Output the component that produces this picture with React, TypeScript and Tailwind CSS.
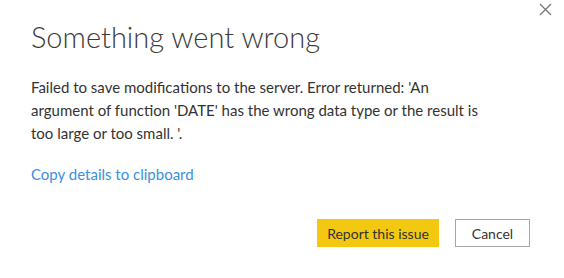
import React from 'react';

const App: React.FC = () => {
    return (
        <div className="relative w-[564px] h-[278px] bg-white text-[#333333] overflow-hidden font-['Lato','Open_Sans',sans-serif]">
            {/* Close */}
            <button className="absolute top-[3px] right-[12px] w-[13px] h-[13px] text-[#777777]">
                <svg viewBox="0 0 13 13" width="13" height="13" fill="none" stroke="currentColor" strokeWidth="1.3">
                    <path d="M1 1 L12 12 M12 1 L1 12" />
                </svg>
            </button>

            <div className="flex flex-col pl-[31px] pr-[34px] pt-[19px]">
                <h1 className="text-[29px] leading-[36px] font-light text-[#3b3b3b]">
                    Something went wrong
                </h1>

                <p className="mt-[21px] text-[15px] leading-[23px] w-[460px]">
                    Failed to save modifications to the server. Error returned: 'An argument of function 'DATE' has the wrong data type or the result is too large or too small. '.
                </p>

                <a className="mt-[19px] text-[15px] leading-[20px] text-[#3a8fde] cursor-pointer">
                    Copy details to clipboard
                </a>

                <div className="mt-[35px] flex justify-end gap-[16px]">
                    <button className="w-[122px] h-[28px] bg-[#f2c811] text-[14px] text-[#333333]">
                        Report this issue
                    </button>
                    <button className="w-[75px] h-[28px] border border-[#a6a6a6] bg-white text-[14px] text-[#333333]">
                        Cancel
                    </button>
                </div>
            </div>
        </div>
    );
};

export default App;
